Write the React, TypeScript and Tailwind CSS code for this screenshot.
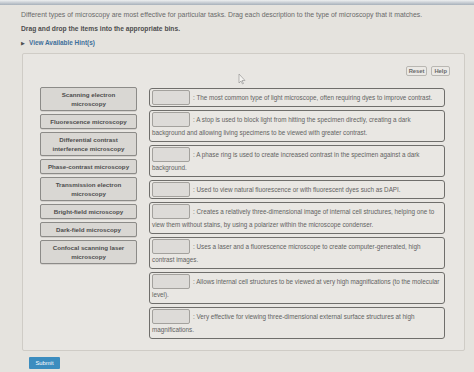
const LABELS = [
  "Scanning electron microscopy",
  "Fluorescence microscopy",
  "Differential contrast interference microscopy",
  "Phase-contrast microscopy",
  "Transmission electron microscopy",
  "Bright-field microscopy",
  "Dark-field microscopy",
  "Confocal scanning laser microscopy",
];

const BINS = [
  "The most common type of light microscope, often requiring dyes to improve contrast.",
  "A stop is used to block light from hitting the specimen directly, creating a dark background and allowing living specimens to be viewed with greater contrast.",
  "A phase ring is used to create increased contrast in the specimen against a dark background.",
  "Used to view natural fluorescence or with fluorescent dyes such as DAPI.",
  "Creates a relatively three-dimensional image of internal cell structures, helping one to view them without stains, by using a polarizer within the microscope condenser.",
  "Uses a laser and a fluorescence microscope to create computer-generated, high contrast images.",
  "Allows internal cell structures to be viewed at very high magnifications (to the molecular level).",
  "Very effective for viewing three-dimensional external surface structures at high magnifications.",
];

export default function App() {
  return (
    <div className="relative h-[372px] w-[474px] overflow-hidden bg-[#e5e3de] font-['Liberation_Sans',Arial,sans-serif]">
      <div className="h-[5px] bg-gradient-to-b from-[#eef0f1] to-[#a7b0ba]" />

      <div className="px-[21px] pt-[5px]">
        <p className="whitespace-nowrap text-[6.9px] leading-[10px] text-[#6a6a6a]">
          Different types of microscopy are most effective for particular tasks. Drag each description to the type of
          microscopy that it matches.
        </p>
        <p className="mt-[4px] text-[6.7px] font-bold leading-[10px] text-[#4e4e4e]">
          Drag and drop the items into the appropriate bins.
        </p>
        <div className="mt-[4px] flex items-center gap-[4px] text-[6.4px] leading-[10px]">
          <span className="text-[5px] text-[#4e4e4e]">▶</span>
          <span className="font-semibold text-[#3d6f9a]">View Available Hint(s)</span>
        </div>

        <div className="ml-[1px] mt-[5px] w-[443px] rounded-[2px] border border-[#cfccc6] bg-[#e8e6e2] pb-[11px] pl-[17px] pr-[14px] pt-[12px]">
          <div className="flex h-[10px] justify-end gap-[4px] text-[5.8px] font-bold text-[#6a6a6a]">
            <span className="flex items-center rounded-[2px] border border-[#b9b7b2] bg-[#ebe9e5] px-[2px]">Reset</span>
            <span className="flex items-center rounded-[2px] border border-[#b9b7b2] bg-[#ebe9e5] px-[2px]">Help</span>
          </div>

          <div className="mt-[11px] flex items-start gap-[12px]">
            <div className="flex w-[97px] flex-col gap-[3px]">
              {LABELS.map((l) => (
                <div
                  key={l}
                  className="rounded-[2px] border border-[#8c8b88] bg-[#d9d7d3] px-[4px] py-[2px] text-center text-[6.2px] font-bold leading-[9px] text-[#4d4d4d] shadow-[0_0.5px_0_#bdbab5]"
                >
                  {l}
                </div>
              ))}
            </div>

            <div className="mt-[1px] flex w-[296px] flex-col gap-[3px]">
              {BINS.map((b) => (
                <div
                  key={b}
                  className="rounded-[3px] border border-[#6f6e6b] bg-[#e9e7e3] p-[2px] text-[6.3px] leading-[13px] text-[#626262]"
                >
                  <span className="-my-[1px] mr-[3px] inline-block h-[15px] w-[38px] rounded-[2px] border border-[#a3a19d] bg-[#dddbd8] align-top" />
                  {`: ${b}`}
                </div>
              ))}
            </div>
          </div>
        </div>

        <button className="ml-[8px] mt-[6px] flex h-[12px] w-[31px] items-center justify-center rounded-[1px] bg-[#3c8dbf] text-[5.8px] text-white">
          Submit
        </button>
      </div>

      <svg className="absolute left-[238px] top-[73px]" width="8" height="12" viewBox="0 0 8 12" aria-hidden>
        <path d="M1 1 L1 10 L3 8 L4.5 11 L5.5 10.5 L4 7.5 L7 7.5 Z" fill="#f4f3f0" stroke="#8a8a8a" strokeWidth="0.6" />
      </svg>
    </div>
  );
}
